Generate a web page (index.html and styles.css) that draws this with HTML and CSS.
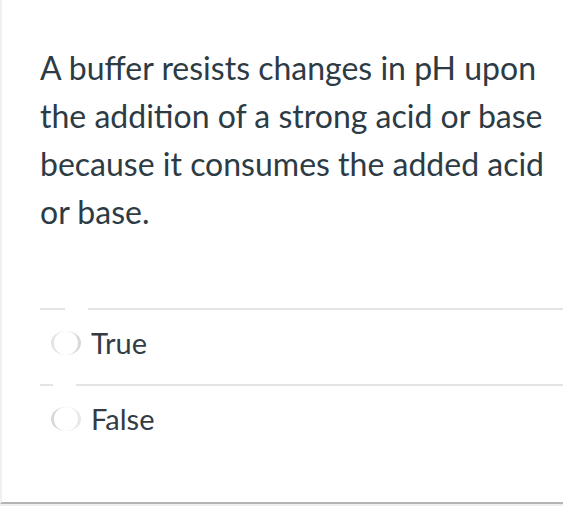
FILE: index.html
```html
<!DOCTYPE html>
<html>
<head>
<meta charset="utf-8">
<link rel="stylesheet" href="styles.css">
</head>
<body>
<div class="card">
  <div class="question">A buffer resists changes in pH upon the addition of a strong acid or base because it consumes the added acid or base.</div>
  <div class="answers">
    <div class="answer">
      <div class="sep"><span class="seg-a"></span><span class="seg-b"></span></div>
      <label class="row"><span class="radio"></span><span class="label">True</span></label>
    </div>
    <div class="answer">
      <div class="sep second"><span class="seg-a"></span><span class="seg-b"></span></div>
      <label class="row"><span class="radio r2"></span><span class="label">False</span></label>
    </div>
  </div>
</div>
</body>
</html>
```
FILE: styles.css
```css
html, body {
  margin: 0;
  padding: 0;
  background: #ffffff;
}
body {
  width: 563px;
  height: 510px;
  overflow: hidden;
  font-family: Lato, "Open Sans", sans-serif;
  color: #2d3b45;
}
.card {
  height: 504px;
  box-sizing: border-box;
  border-left: 2px solid #f0f0f0;
  border-bottom: 2px solid #b4b4b4;
  box-shadow: 0 2px 0 #eeeeee;
}
.question {
  padding: 44px 10px 0 38px;
  font-size: 32px;
  line-height: 48px;
}
.answers {
  margin-top: 72px;
}
.answer {
  height: 76px;
  display: flex;
  flex-direction: column;
}
.sep {
  display: flex;
  height: 2px;
  margin-left: 38px;
}
.sep span {
  height: 2px;
  background: #e4e4e4;
}
.seg-a { width: 25px; }
.seg-b { flex: 1; margin-left: 23px; }
.second .seg-a { width: 13px; }
.second .seg-b { margin-left: 23px; }
.row {
  display: flex;
  align-items: center;
  padding: 16px 0 0 49px;
  gap: 10px;
}
.radio {
  width: 30px;
  height: 24px;
  box-sizing: border-box;
  border-radius: 50%;
  border-left: 3px solid #e4e4e4;
  border-right: 3px solid #d8d8d8;
  border-top: 0;
  border-bottom: 0;
}
.r2 {
  border-left-color: #d8d8d8;
  border-right-color: #e8e8e8;
}
.label {
  font-size: 29px;
  line-height: 34px;
  color: #333c44;
}
```
